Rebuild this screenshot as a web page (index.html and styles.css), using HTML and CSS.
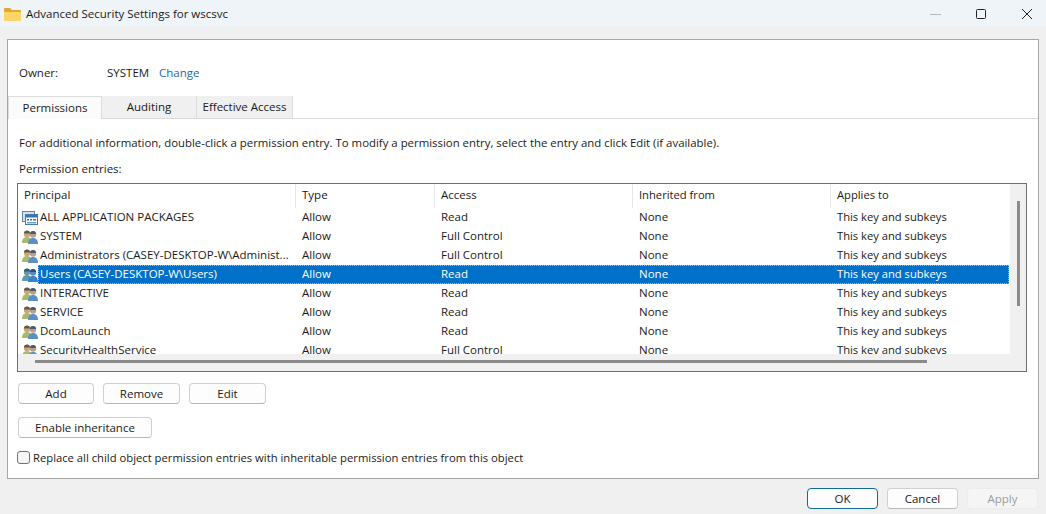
FILE: index.html
```html
<!DOCTYPE html>
<html>
<head>
  <title>Advanced Security Settings for wscsvc</title>
  <link rel="stylesheet" href="styles.css">
</head>
<body>
  <svg class="defs" width="0" height="0">
    <symbol id="group" viewBox="0 0 16 14">
      <circle cx="5" cy="4" r="3.2" fill="#c9a77c"/>
      <path d="M2 3.5a3 3 0 0 1 6 0z" fill="#5f5a48"/>
      <path d="M0 13c0-4 2-6 5-6s5 2 5 6z" fill="#a9b96c"/>
      <circle cx="11" cy="4.5" r="3.2" fill="#b8a08c"/>
      <path d="M8 4a3 3 0 0 1 6 0z" fill="#4a5a6a"/>
      <path d="M6 14c0-4 2-6 5-6s5 2 5 6z" fill="#5b8fc7"/>
    </symbol>
    <symbol id="group-sel" viewBox="0 0 16 14">
      <circle cx="5" cy="4" r="3.2" fill="#6a95a8"/>
      <path d="M2 3.5a3 3 0 0 1 6 0z" fill="#2f5f70"/>
      <path d="M0 13c0-4 2-6 5-6s5 2 5 6z" fill="#5a9bb0"/>
      <circle cx="11" cy="4.5" r="3.2" fill="#5a8abd"/>
      <path d="M8 4a3 3 0 0 1 6 0z" fill="#24507f"/>
      <path d="M6 14c0-4 2-6 5-6s5 2 5 6z" fill="#3a80cc"/>
    </symbol>
    <symbol id="packages" viewBox="0 0 16 14">
      <rect x="0.5" y="0.5" width="12" height="10" fill="#cfe0f0" stroke="#5b86ad"/>
      <rect x="3.5" y="3.5" width="12" height="10" fill="#fff" stroke="#4a7aa8"/>
      <rect x="4" y="4" width="11" height="2.5" fill="#2f78b8"/>
      <rect x="5" y="8" width="2" height="1.5" fill="#2f78b8"/>
      <rect x="8" y="8" width="2" height="1.5" fill="#2f78b8"/>
      <rect x="11" y="8" width="3" height="1.5" fill="#2f78b8"/>
      <rect x="5" y="11" width="9" height="1.5" fill="#6fa3cf"/>
    </symbol>
  </svg>

  <div class="titlebar">
    <svg class="folder" width="17" height="14" viewBox="0 0 17 14">
      <path d="M0 2a1 1 0 0 1 1-1h5l2 2h8a1 1 0 0 1 1 1v1H0z" fill="#e0a92e"/>
      <path d="M0 5h17v8a1 1 0 0 1-1 1H1a1 1 0 0 1-1-1z" fill="#fbd568"/>
    </svg>
    <span class="title">Advanced Security Settings for wscsvc</span>
    <div class="controls">
      <svg width="12" height="12" viewBox="0 0 12 12"><path d="M0 6.5h11" stroke="#b4b8bc"/></svg>
      <svg width="12" height="12" viewBox="0 0 12 12"><rect x="1.5" y="1.5" width="9" height="9" rx="1" fill="none" stroke="#222"/></svg>
      <svg width="12" height="12" viewBox="0 0 12 12"><path d="M1 1l10 10M11 1L1 11" stroke="#222"/></svg>
    </div>
  </div>

  <div class="panel">
    <div class="owner">
      <span class="owner-label">Owner:</span>
      <span class="owner-name">SYSTEM</span>
      <span class="link">Change</span>
    </div>

    <div class="tabs">
      <div class="tab tab-active">Permissions</div>
      <div class="tab">Auditing</div>
      <div class="tab tab-last">Effective Access</div>
    </div>

    <div class="content">
      <p class="info">For additional information, double-click a permission entry. To modify a permission entry, select the entry and click Edit (if available).</p>
      <p class="entries-label">Permission entries:</p>

      <div class="listbox">
        <div class="list">
          <div class="row head">
            <div>Principal</div><div>Type</div><div>Access</div><div>Inherited from</div><div>Applies to</div>
          </div>
          <div class="row">
            <div><svg class="ico"><use href="#packages"/></svg>ALL APPLICATION PACKAGES</div><div>Allow</div><div>Read</div><div>None</div><div>This key and subkeys</div>
          </div>
          <div class="row">
            <div><svg class="ico"><use href="#group"/></svg>SYSTEM</div><div>Allow</div><div>Full Control</div><div>None</div><div>This key and subkeys</div>
          </div>
          <div class="row">
            <div><svg class="ico"><use href="#group"/></svg>Administrators (CASEY-DESKTOP-W\Administ...</div><div>Allow</div><div>Full Control</div><div>None</div><div>This key and subkeys</div>
          </div>
          <div class="row selected">
            <div><svg class="ico"><use href="#group-sel"/></svg>Users (CASEY-DESKTOP-W\Users)</div><div>Allow</div><div>Read</div><div>None</div><div>This key and subkeys</div>
          </div>
          <div class="row">
            <div><svg class="ico"><use href="#group"/></svg>INTERACTIVE</div><div>Allow</div><div>Read</div><div>None</div><div>This key and subkeys</div>
          </div>
          <div class="row">
            <div><svg class="ico"><use href="#group"/></svg>SERVICE</div><div>Allow</div><div>Read</div><div>None</div><div>This key and subkeys</div>
          </div>
          <div class="row">
            <div><svg class="ico"><use href="#group"/></svg>DcomLaunch</div><div>Allow</div><div>Read</div><div>None</div><div>This key and subkeys</div>
          </div>
          <div class="row">
            <div><svg class="ico"><use href="#group"/></svg>SecurityHealthService</div><div>Allow</div><div>Full Control</div><div>None</div><div>This key and subkeys</div>
          </div>
        </div>
        <div class="vscroll"><div class="vthumb"></div></div>
        <div class="hscroll"><div class="hthumb"></div></div>
        <div class="corner"></div>
      </div>

      <div class="actions">
        <button class="btn btn-small">Add</button>
        <button class="btn btn-small">Remove</button>
        <button class="btn btn-small">Edit</button>
      </div>
      <button class="btn btn-wide">Enable inheritance</button>
      <label class="replace"><span class="check"></span>Replace all child object permission entries with inheritable permission entries from this object</label>
    </div>
  </div>

  <div class="footer">
    <button class="btn btn-foot btn-ok">OK</button>
    <button class="btn btn-foot">Cancel</button>
    <button class="btn btn-foot btn-off">Apply</button>
  </div>
</body>
</html>
```

FILE: styles.css
```css
html, body {
  margin: 0;
  height: 100%;
}
body {
  width: 1046px;
  height: 514px;
  overflow: hidden;
  background-color: #f0f0f0;
  font-family: "Open Sans", "Noto Sans", sans-serif;
  font-size: 11.5px;
  color: #1a1a1a;
}
.defs {
  display: block;
  height: 0;
}
.titlebar {
  display: flex;
  align-items: center;
  height: 27px;
  background-color: #eff4f9;
  padding-left: 4px;
}
.folder {
  margin-right: 5px;
}
.title {
  font-size: 11.5px;
}
.controls {
  display: flex;
  margin-left: auto;
  gap: 34px;
  padding-right: 13px;
}
.controls svg:first-child {
  margin-right: -1px;
}
.panel {
  box-sizing: border-box;
  height: 440px;
  margin: 12px 7px 0 7px;
  background-color: white;
  border: 1px solid #a6a6a6;
}
.owner {
  display: flex;
  align-items: center;
  height: 18px;
  margin-top: 23px;
  padding-left: 11px;
}
.owner-label {
  width: 88px;
}
.owner-name {
  width: 52px;
}
.link {
  color: #1a6aa5;
}
.tabs {
  display: flex;
  height: 22px;
  margin-top: 15px;
  border-bottom: 1px solid #d9d9d9;
}
.tab {
  width: 95px;
  height: 22px;
  line-height: 21px;
  text-align: center;
  background-color: #f0f0f0;
  border-right: 1px solid #dddddd;
  box-sizing: border-box;
}
.tab-active {
  width: 94px;
  background-color: #fbfbfb;
  border: 1px solid #dddddd;
  border-bottom: none;
  height: 23px;
}
.tab-last {
  width: 96px;
}
.content {
  padding: 0 11px 0 9px;
}
.info {
  margin: 15px 0 0 2px;
  font-size: 11.4px;
  line-height: 18px;
}
.entries-label {
  margin: 8px 0 0 2px;
  line-height: 18px;
}
.listbox {
  display: grid;
  grid-template-columns: 992px 16px;
  grid-template-rows: 170px 17px;
  width: 1008px;
  margin-top: 5px;
  border: 1px solid #6e6e6e;
  background-color: #f0f0f0;
}
.list {
  overflow: hidden;
  background-color: white;
}
.row {
  display: grid;
  grid-template-columns: 277px 139px 198px 198px 179px;
  width: 991px;
  height: 19px;
  line-height: 17px;
  white-space: nowrap;
}
.row > div {
  padding-left: 7px;
  overflow: hidden;
}
.row > div:first-child {
  display: flex;
  align-items: flex-start;
  padding-left: 4px;
}
.row > div:last-child {
  font-size: 11.2px;
}
.head {
  height: 24px;
  line-height: 21px;
}
.head > div {
  border-left: 1px solid #e5e5e5;
  padding-left: 6px;
}
.head > div:first-child {
  border-left: none;
  padding-left: 6px;
}
.head > div:nth-child(4) {
  font-size: 11.2px;
}
/* the highlight starts after the icon */
.selected {
  position: relative;
  background: linear-gradient(to right, white 20px, #0070c8 20px);
  color: white;
}
.selected::after {
  content: "";
  position: absolute;
  top: 0;
  right: 0;
  bottom: 0;
  left: 20px;
  border: 1px dotted #8fc0e8;
}
.ico {
  width: 16px;
  height: 14px;
  margin: 3px 2px 0 0;
  flex: none;
}
.vscroll {
  position: relative;
}
.vthumb {
  position: absolute;
  left: 7px;
  top: 17px;
  width: 3px;
  height: 105px;
  background-color: #8a8a8a;
}
.hscroll {
  position: relative;
}
.hthumb {
  position: absolute;
  left: 17px;
  top: 6px;
  width: 892px;
  height: 3px;
  background-color: #8a8a8a;
}
.btn {
  display: block;
  box-sizing: border-box;
  height: 21px;
  padding: 0;
  font: inherit;
  color: inherit;
  background-color: #fdfdfd;
  border: 1px solid #d0d0d0;
  border-bottom-color: #b8b8b8;
  border-radius: 4px;
}
.actions {
  display: flex;
  gap: 9px;
  margin: 11px 0 0 1px;
}
.btn-small {
  width: 77px;
}
.btn-small:first-child {
  width: 76px;
}
.btn-wide {
  width: 134px;
  margin: 13px 0 0 1px;
}
.replace {
  display: flex;
  align-items: center;
  height: 16px;
  margin-top: 11px;
  font-size: 11.25px;
}
.check {
  box-sizing: border-box;
  width: 13px;
  height: 13px;
  margin-right: 3px;
  background-color: #f5f5f5;
  border: 1px solid #707070;
  border-radius: 3px;
}
.footer {
  display: flex;
  justify-content: flex-end;
  gap: 9px;
  margin-top: 9px;
  padding-right: 8px;
}
.btn-foot {
  width: 71px;
}
.btn-ok {
  border: 1px solid #0f6a9e;
  border-radius: 4px;
}
.btn-off {
  color: #9c9c9c;
  background-color: #f5f5f5;
  border-color: #ececec;
}
```
